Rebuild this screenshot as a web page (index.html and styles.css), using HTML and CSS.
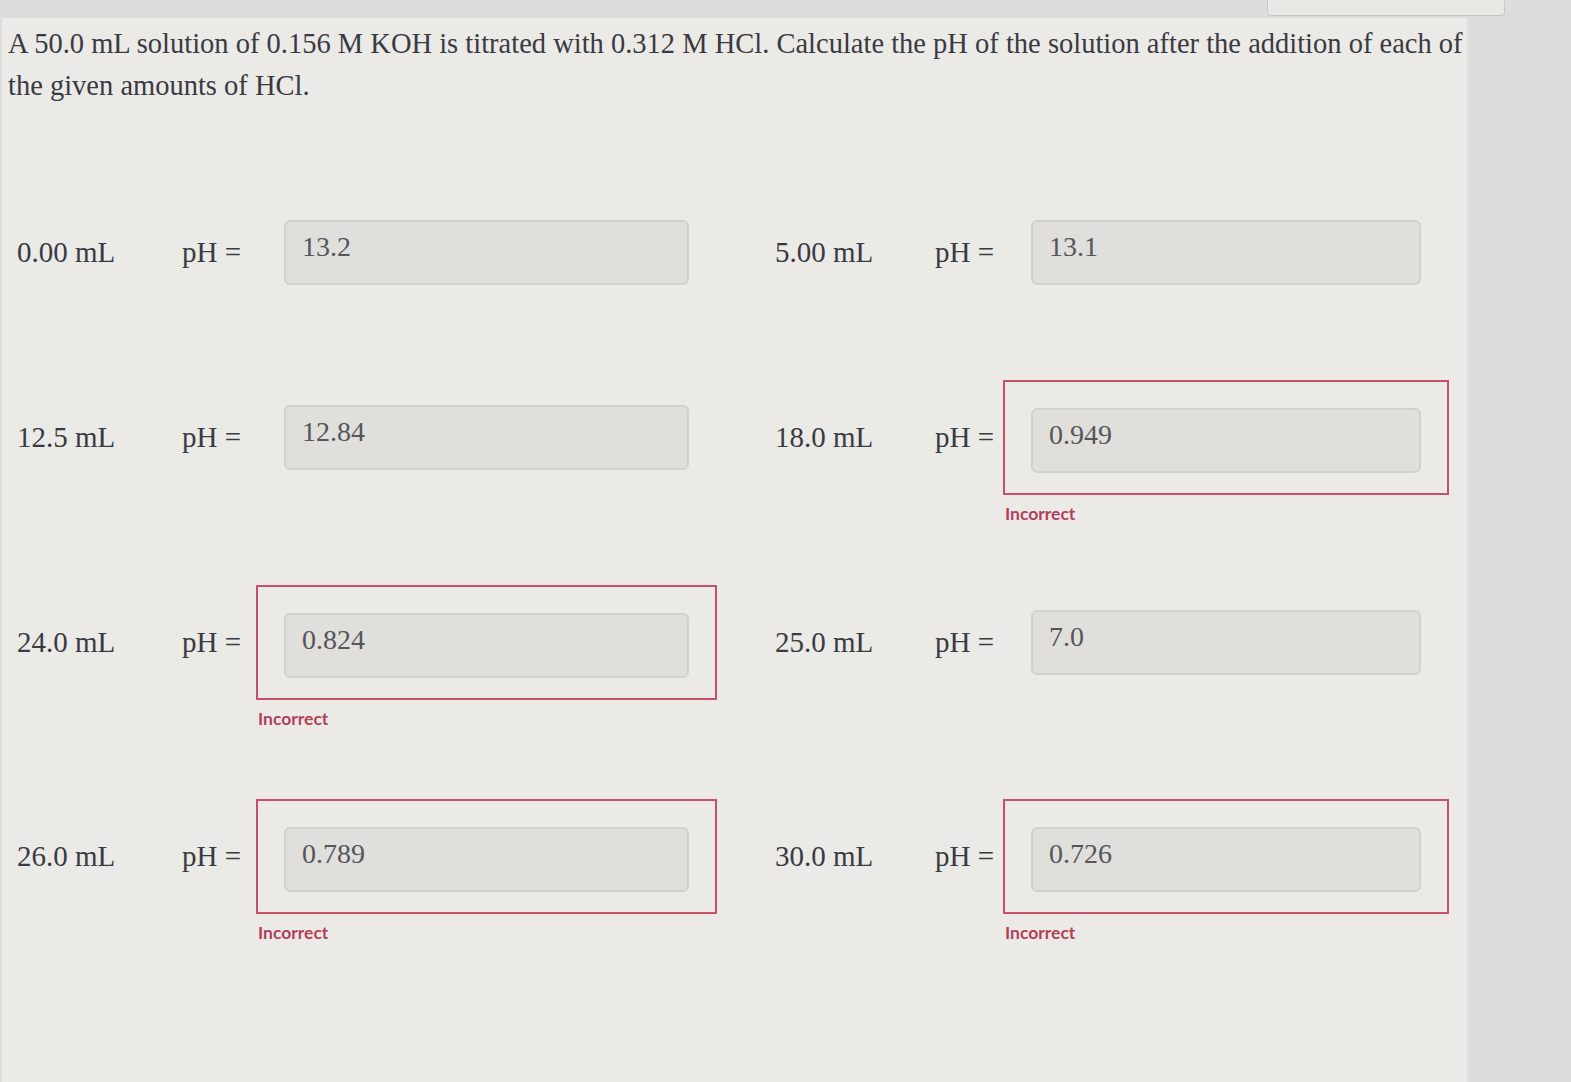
FILE: index.html
```html
<!DOCTYPE html>
<html lang="en">
<head>
<meta charset="UTF-8" />
<meta name="viewport" content="width=device-width, initial-scale=1.0">
<title>Titration Problem</title>
<link rel="stylesheet" href="styles.css">
</head>
<body>

<div class="topbar">
  <div class="tab"></div>
</div>

<div class="panel">
  <p class="question">A 50.0 mL solution of 0.156 M KOH is titrated with 0.312 M HCl. Calculate the pH of the solution after the addition of each of the given amounts of HCl.</p>

  <div class="parts">
    <div class="part">
      <span class="vol">0.00 mL</span>
      <span class="eq">pH =</span>
      <div class="answer"><input type="text" value="13.2" readonly></div>
    </div>
    <div class="part right">
      <span class="vol">5.00 mL</span>
      <span class="eq">pH =</span>
      <div class="answer"><input type="text" value="13.1" readonly></div>
    </div>

    <div class="part">
      <span class="vol">12.5 mL</span>
      <span class="eq">pH =</span>
      <div class="answer"><input type="text" value="12.84" readonly></div>
    </div>
    <div class="part right">
      <span class="vol">18.0 mL</span>
      <span class="eq">pH =</span>
      <div class="answer incorrect">
        <input type="text" value="0.949" readonly>
        <div class="feedback">Incorrect</div>
      </div>
    </div>

    <div class="part">
      <span class="vol">24.0 mL</span>
      <span class="eq">pH =</span>
      <div class="answer incorrect">
        <input type="text" value="0.824" readonly>
        <div class="feedback">Incorrect</div>
      </div>
    </div>
    <div class="part right">
      <span class="vol">25.0 mL</span>
      <span class="eq">pH =</span>
      <div class="answer"><input type="text" value="7.0" readonly></div>
    </div>

    <div class="part">
      <span class="vol">26.0 mL</span>
      <span class="eq">pH =</span>
      <div class="answer incorrect">
        <input type="text" value="0.789" readonly>
        <div class="feedback">Incorrect</div>
      </div>
    </div>
    <div class="part right">
      <span class="vol">30.0 mL</span>
      <span class="eq">pH =</span>
      <div class="answer incorrect">
        <input type="text" value="0.726" readonly>
        <div class="feedback">Incorrect</div>
      </div>
    </div>
  </div>
</div>

</body>
</html>
```

FILE: styles.css
```css
body {margin:0; background:#dedddb; font-family:'Liberation Serif', 'Times New Roman', serif; color:#3a3a42; overflow:hidden;}
.topbar {height:18px; display:flex; justify-content:flex-end;}
.tab {width:236px; height:15px; margin-right:66px; background:#e9e8e5; border:1px solid #c9c8c5; border-top:none; border-radius:0 0 4px 4px;}
.panel {width:1459px; height:1064px; margin-left:2px; padding:5px 0 0 6px; background:#ebeae7;}
.question {margin:0; font-size:28.5px; line-height:42px; width:1460px;}
.parts {display:grid; grid-template-columns:758px 1fr; grid-template-rows:180px 190px 220px 208px; margin:55px 0 0 9px;}
.part {display:flex; align-items:center;}
.vol {width:165px; font-size:29px;}
.eq {width:74px; font-size:29px;}
.part.right .vol {width:160px;}
.part.right .eq {width:68px;}
.answer {padding:26px; border:2px solid transparent;}
.answer.incorrect {border-color:#c6506a;}
.answer input {display:block; box-sizing:border-box; width:405px; height:65px; margin:0; padding:0 16px 10px; background:#e0dfdc; border:2px solid #d2d1ce; border-radius:6px; font-family:'Liberation Serif', 'Times New Roman', serif; font-size:28px; color:#55555a; outline:none;}
.part.right .answer input {width:390px;}
.feedback {height:22px; margin:30px 0 -58px -26px; font-family:Lato, 'Open Sans', sans-serif; font-weight:bold; font-size:17.5px; line-height:22px; color:#b3405a;}
```
